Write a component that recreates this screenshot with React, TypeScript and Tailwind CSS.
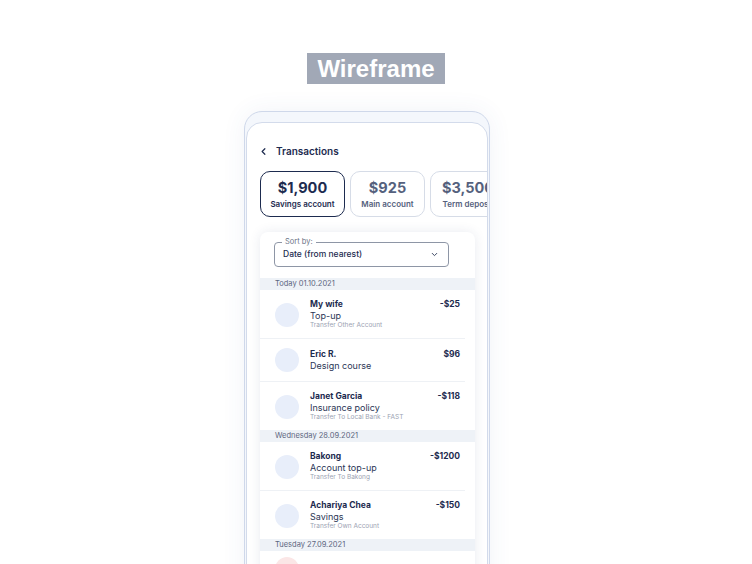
import { ChevronLeft, ChevronDown } from "lucide-react";

type Tx = {
  name: string;
  desc: string;
  sub?: string;
  amount: string;
};

type Group = { label: string; items: Tx[] };

const accounts = [
  { amount: "$1,900", label: "Savings account", active: true, w: "w-[85px]" },
  { amount: "$925", label: "Main account", active: false, w: "w-[75px]" },
  { amount: "$3,500", label: "Term deposit", active: false, w: "w-[76px]" },
];

const groups: Group[] = [
  {
    label: "Today 01.10.2021",
    items: [
      { name: "My wife", desc: "Top-up", sub: "Transfer Other Account", amount: "-$25" },
      { name: "Eric R.", desc: "Design course", amount: "$96" },
      { name: "Janet Garcia", desc: "Insurance policy", sub: "Transfer To Local Bank - FAST", amount: "-$118" },
    ],
  },
  {
    label: "Wednesday 28.09.2021",
    items: [
      { name: "Bakong", desc: "Account top-up", sub: "Transfer To Bakong", amount: "-$1200" },
      { name: "Achariya Chea", desc: "Savings", sub: "Transfer Own Account", amount: "-$150" },
    ],
  },
];

function Row({ tx, last }: { tx: Tx; last: boolean }) {
  return (
    <div
      className={`flex items-center pl-[15px] mr-[10px] ${last ? "" : "border-b border-[#eef1f5]"} ${
        tx.sub ? "pt-[9px] pb-[8px]" : "pt-[9px] pb-[9px]"
      }`}
    >
      <div className="w-[24px] h-[24px] rounded-full shrink-0 bg-[#e8eefa]" />
      <div className="flex-1 ml-[11px] pr-[5px] flex justify-between">
        <div className="flex flex-col">
          <span className="text-[8.5px] leading-[11px] font-bold text-[#1d2b4f]">{tx.name}</span>
          <span className="text-[9px] leading-[11px] text-[#2b3656]">{tx.desc}</span>
          {tx.sub && <span className="text-[6.5px] leading-[9px] text-[#9ba2b2]">{tx.sub}</span>}
        </div>
        <span className="text-[8.5px] leading-[11px] font-bold text-[#1d2b4f]">{tx.amount}</span>
      </div>
    </div>
  );
}

export default function App() {
  return (
    <div
      className="w-[752px] h-[564px] overflow-hidden bg-white flex flex-col items-start"
      style={{ fontFamily: "Inter, 'Noto Sans', sans-serif" }}
    >
      <div
        className="ml-[307px] mt-[53px] w-[138px] h-[31px] bg-[#a1a8b6] text-white text-[24px] font-bold flex items-center justify-center"
        style={{ fontFamily: "'Liberation Sans', Arial, sans-serif" }}
      >
        Wireframe
      </div>

      {/* phone */}
      <div className="ml-[244px] mt-[27px] w-[246px] h-[480px] shrink-0 rounded-t-[18px] border border-[#cfd8ea] bg-[#f4f7fc] pt-[10px] px-px shadow-[0_0_24px_rgba(60,90,160,0.07)]">
        <div className="h-full rounded-t-[16px] border border-[#d3dbeb] bg-white overflow-hidden">
          <div className="flex items-center pl-[11px] pt-[20px] h-[36px]">
            <ChevronLeft size={11} strokeWidth={2.6} className="text-[#1d2b4f]" />
            <span className="ml-[7px] text-[10px] font-semibold text-[#1d2b4f]">Transactions</span>
          </div>

          <div className="flex gap-[5px] pl-[13px] mt-[12px]">
            {accounts.map((a) => (
              <div
                key={a.label}
                className={`${a.w} h-[46px] shrink-0 rounded-[10px] flex flex-col items-center justify-center ${
                  a.active ? "border-[1.5px] border-[#1d2b4f] text-[#1d2b4f]" : "border border-[#d6dce7] text-[#55617d]"
                }`}
              >
                <span className="text-[14.5px] leading-[18px] font-bold">{a.amount}</span>
                <span className="text-[8px] leading-[12px] font-semibold mt-[1px] whitespace-nowrap">{a.label}</span>
              </div>
            ))}
          </div>

          <div className="ml-[13px] mt-[15px] w-[215px] rounded-t-[8px] bg-white shadow-[0_0_12px_rgba(40,60,110,0.10)] pt-[10px]">
            <div className="relative ml-[14px] mr-[26px] h-[25px] rounded-[4px] border border-[#8e96a6] flex items-center justify-between pl-[8px] pr-[9px]">
              <span className="absolute -top-[6px] left-[7px] bg-white px-[3px] text-[7.5px] leading-[10px] text-[#6c7487]">
                Sort by:
              </span>
              <span className="text-[8.5px] font-medium text-[#1d2b4f]">Date (from nearest)</span>
              <ChevronDown size={9} strokeWidth={2.6} className="text-[#3a4562]" />
            </div>

            <div className="mt-[11px]">
              {groups.map((g) => (
                <div key={g.label}>
                  <div className="h-[12px] bg-[#eef2f7] pl-[15px] flex items-center text-[7.5px] text-[#5d6680]">
                    {g.label}
                  </div>
                  {g.items.map((tx, i) => (
                    <Row key={tx.name} tx={tx} last={i === g.items.length - 1} />
                  ))}
                </div>
              ))}
              <div className="h-[12px] bg-[#eef2f7] pl-[15px] flex items-center text-[7.5px] text-[#5d6680]">
                Tuesday 27.09.2021
              </div>
              <div className="pl-[15px] pt-[6px] h-[40px]">
                <div className="w-[24px] h-[24px] rounded-full bg-[#fbe6e6]" />
              </div>
            </div>
          </div>
        </div>
      </div>
    </div>
  );
}
